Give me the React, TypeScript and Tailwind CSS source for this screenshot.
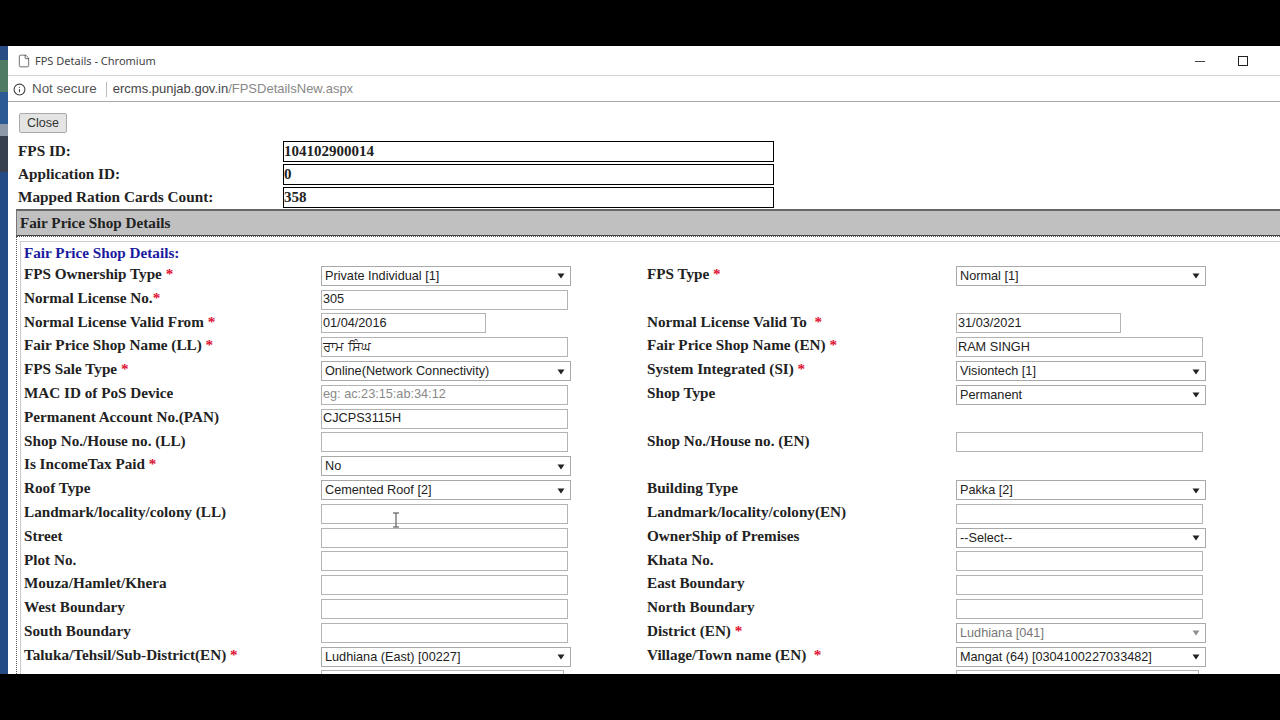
import { Info, File } from "lucide-react";

const SERIF = "font-['Liberation_Serif',serif]";
const SANS = "font-['Liberation_Sans',sans-serif]";

type Control =
  | { kind: "input"; value?: string; placeholder?: string; short?: boolean; narrow?: boolean; cursor?: boolean }
  | { kind: "select"; value: string; disabled?: boolean };

interface Row {
  left: string;
  leftReq?: string;
  leftControl: Control;
  right?: string;
  rightReq?: string;
  rightControl?: Control;
}

const ROWS: Row[] = [
  { left: "FPS Ownership Type", leftReq: " *", leftControl: { kind: "select", value: "Private Individual [1]" }, right: "FPS Type", rightReq: " *", rightControl: { kind: "select", value: "Normal [1]" } },
  { left: "Normal License No.", leftReq: "*", leftControl: { kind: "input", value: "305" } },
  { left: "Normal License Valid From", leftReq: " *", leftControl: { kind: "input", value: "01/04/2016", short: true }, right: "Normal License Valid To", rightReq: "  *", rightControl: { kind: "input", value: "31/03/2021", short: true } },
  { left: "Fair Price Shop Name (LL)", leftReq: " *", leftControl: { kind: "input", value: "ਰਾਮ ਸਿੰਘ" }, right: "Fair Price Shop Name (EN)", rightReq: " *", rightControl: { kind: "input", value: "RAM SINGH" } },
  { left: "FPS Sale Type", leftReq: " *", leftControl: { kind: "select", value: "Online(Network Connectivity)" }, right: "System Integrated (SI)", rightReq: " *", rightControl: { kind: "select", value: "Visiontech [1]" } },
  { left: "MAC ID of PoS Device", leftControl: { kind: "input", placeholder: "eg: ac:23:15:ab:34:12" }, right: "Shop Type", rightControl: { kind: "select", value: "Permanent" } },
  { left: "Permanent Account No.(PAN)", leftControl: { kind: "input", value: "CJCPS3115H" } },
  { left: "Shop No./House no. (LL)", leftControl: { kind: "input" }, right: "Shop No./House no. (EN)", rightControl: { kind: "input" } },
  { left: "Is IncomeTax Paid", leftReq: " *", leftControl: { kind: "select", value: "No" } },
  { left: "Roof Type", leftControl: { kind: "select", value: "Cemented Roof [2]" }, right: "Building Type", rightControl: { kind: "select", value: "Pakka [2]" } },
  { left: "Landmark/locality/colony (LL)", leftControl: { kind: "input", cursor: true }, right: "Landmark/locality/colony(EN)", rightControl: { kind: "input" } },
  { left: "Street", leftControl: { kind: "input" }, right: "OwnerShip of Premises", rightControl: { kind: "select", value: "--Select--" } },
  { left: "Plot No.", leftControl: { kind: "input" }, right: "Khata No.", rightControl: { kind: "input" } },
  { left: "Mouza/Hamlet/Khera", leftControl: { kind: "input" }, right: "East Boundary", rightControl: { kind: "input" } },
  { left: "West Boundary", leftControl: { kind: "input" }, right: "North Boundary", rightControl: { kind: "input" } },
  { left: "South Boundary", leftControl: { kind: "input" }, right: "District (EN)", rightReq: " *", rightControl: { kind: "select", value: "Ludhiana [041]", disabled: true } },
  { left: "Taluka/Tehsil/Sub-District(EN)", leftReq: " *", leftControl: { kind: "select", value: "Ludhiana (East) [00227]" }, right: "Village/Town name (EN)", rightReq: "  *", rightControl: { kind: "select", value: "Mangat (64) [0304100227033482]" } },
  { left: "Block (EN)", leftControl: { kind: "input", narrow: true }, right: "CD Block (EN)", rightControl: { kind: "input", narrow: true } },
];

function Label({ text, req }: { text?: string; req?: string }) {
  return (
    <div className={`${SERIF} whitespace-pre text-[15.2px] font-bold text-[#222] -mt-[3px]`}>
      {text}
      {req && <span className="text-[#e01030]">{req}</span>}
    </div>
  );
}

function Field({ control }: { control?: Control }) {
  if (!control) return null;
  if (control.kind === "select") {
    return (
      <div
        className={`${SANS} flex h-[20px] w-[249.5px] items-center justify-between border border-[#a9a9a9] bg-white pl-[3px] pr-[5px] pt-[1px] text-[12.7px] ${
          control.disabled ? "text-[#777]" : "text-[#222]"
        }`}
      >
        <span>{control.value}</span>
        <svg width="8" height="6" viewBox="0 0 8 6" className={control.disabled ? "opacity-50" : ""}>
          <path d="M0.5 0.5h7L4 5.5z" fill="#222" />
        </svg>
      </div>
    );
  }
  const width = control.short ? "w-[165px]" : control.narrow ? "w-[243px]" : "w-[247px]";
  return (
    <div
      className={`${SANS} relative flex h-[20px] items-center border border-[#b4b4b4] bg-white pl-[1px] text-[12.7px] ${width} ${
        control.placeholder ? "text-[#888]" : "text-[#222]"
      }`}
    >
      <span>{control.value ?? control.placeholder}</span>
      {control.cursor && (
        <svg width="8" height="16" viewBox="0 0 8 16" className="absolute left-[70px] top-[7px]">
          <path d="M1 1h6M4 1v14M1 15h6" stroke="#444" strokeWidth="1" fill="none" />
        </svg>
      )}
    </div>
  );
}

function IdRow({ label, value }: { label: string; value: string }) {
  return (
    <div className="flex h-[23px] items-center pl-[10px]">
      <div className={`${SERIF} w-[265px] text-[15.25px] font-bold text-[#222]`}>{label}</div>
      <div className={`${SERIF} flex h-[21px] w-[491px] items-center border border-black text-[15px] font-bold text-[#222]`}>
        {value}
      </div>
    </div>
  );
}

export default function App() {
  return (
    <div className="flex h-[720px] w-[1280px] flex-col overflow-hidden bg-black">
      <div className="h-[46px] shrink-0" />
      <div className="flex h-[628px] shrink-0">
        {/* desktop peeking out behind the popup */}
        <div className="flex w-[8px] shrink-0 flex-col">
          <div className="h-[14px] bg-[#274d84]" />
          <div className="h-[32px] bg-[#4f7a63]" />
          <div className="h-[32px] bg-[#2b5a94]" />
          <div className="h-[12px] bg-[#8d99a8]" />
          <div className="h-[36px] bg-[#36404f]" />
          <div className="flex-1 bg-[#244a86]" />
        </div>

        <div className="flex min-w-0 flex-1 flex-col overflow-hidden bg-white">
          {/* title bar */}
          <div className="flex h-[30px] shrink-0 items-center border-b border-[#d4d4d4] pl-[9px] pt-[1px]">
            <File size={14} strokeWidth={1.2} className="text-[#333]" />
            <span className="ml-[4px] font-['Noto_Sans',sans-serif] text-[11px] text-[#444]">FPS Details - Chromium</span>
            <div className="ml-auto flex items-center pr-[32px]">
              <div className="h-px w-[10px] bg-[#444]" />
              <div className="ml-[33px] size-[10px] border border-[#222]" />
            </div>
          </div>

          {/* address bar */}
          <div className={`${SANS} flex h-[26px] shrink-0 items-center border-b border-[#aaa] pl-[5px] pt-[1px] text-[13px]`}>
            <Info size={13} className="text-[#444]" />
            <span className="ml-[6px] text-[13.4px] text-[#555]">Not secure</span>
            <span className="ml-[9px] mr-[6px] h-[15px] w-px bg-[#bbb]" />
            <span className="text-[#444]">ercms.punjab.gov.in</span>
            <span className="text-[#888]">/FPSDetailsNew.aspx</span>
          </div>

          {/* page */}
          <div className="flex min-h-0 flex-1 flex-col overflow-hidden">
            <div className="pl-[11px] pt-[11px]">
              <div className={`${SANS} flex h-[20px] w-[48px] items-center justify-center rounded-[2px] border border-[#aaa] bg-[#e4e4e4] text-[12.5px] text-[#333]`}>
                Close
              </div>
            </div>
            <div className="pt-[7px]">
              <IdRow label="FPS ID:" value="104102900014" />
              <IdRow label="Application ID:" value="0" />
              <IdRow label="Mapped Ration Cards Count:" value="358" />
            </div>

            <div className="ml-[8px] flex h-[27px] shrink-0 items-center border-l border-t-2 border-b border-l-[#777] border-t-[#666] border-b-[#444] bg-[#c0c0c0] pl-[3px]">
              <span className={`${SERIF} text-[15.2px] font-bold text-[#222]`}>Fair Price Shop Details</span>
            </div>

            <div className="ml-[8px] flex min-h-0 flex-1 flex-col border-l border-t border-dotted border-[#555] pl-[3px] pt-[4px]">
              <div className="min-h-0 flex-1 border-l border-t border-[#ccc] pl-[3px]">
                <div className={`${SERIF} h-[22px] text-[15.2px] font-bold text-[#1a1aa0]`}>Fair Price Shop Details:</div>
                <div className="grid grid-cols-[297px_326px_309px_1fr]">
                  {ROWS.map((row) => (
                    <div key={row.left} className="col-span-4 grid h-[23.8px] grid-cols-subgrid items-center">
                      <Label text={row.left} req={row.leftReq} />
                      <Field control={row.leftControl} />
                      <Label text={row.right} req={row.rightReq} />
                      <Field control={row.rightControl} />
                    </div>
                  ))}
                </div>
              </div>
            </div>
          </div>
        </div>
      </div>
      <div className="flex-1" />
    </div>
  );
}
